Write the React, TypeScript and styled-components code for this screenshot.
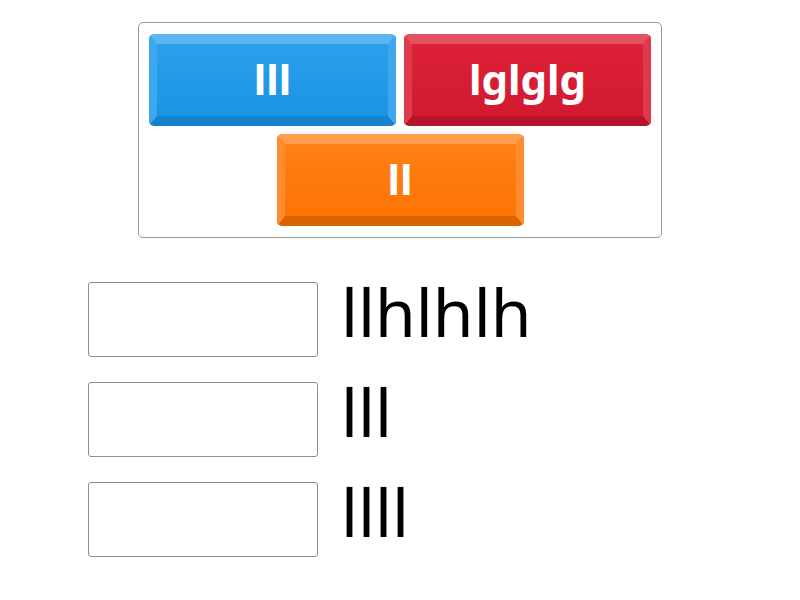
import React from "react";
import styled, { createGlobalStyle } from "styled-components";

const Global = createGlobalStyle`
  html, body { margin: 0; padding: 0; background: #fff; }
  body { font-family: "Noto Sans", "Open Sans", sans-serif; width: 800px; height: 600px; overflow: hidden; }
`;

const Page = styled.div`
  display: flex;
  flex-direction: column;
  padding-top: 22px;
`;

const Bank = styled.div`
  width: 524px;
  box-sizing: border-box;
  margin: 0 auto;
  border: 1px solid #9a9a9a;
  border-radius: 5px;
  padding: 11px 10px 11px 10px;
  display: flex;
  flex-wrap: wrap;
  justify-content: center;
  gap: 8px;
`;

type Tone = { top: string; side: string; face1: string; face2: string; bottom: string };

const tones: Record<string, Tone> = {
  blue: { top: "#5cb4f0", side: "#3fa7ed", face1: "#2da0ea", face2: "#1994e6", bottom: "#1482cf" },
  red: { top: "#e3505f", side: "#df3a4c", face1: "#dd2136", face2: "#d11a30", bottom: "#b5152a" },
  orange: { top: "#ff9d4d", side: "#ff8c30", face1: "#ff8014", face2: "#fd7404", bottom: "#dc6400" },
};

const Tile = styled.div<{ $tone: Tone }>`
  width: 247px;
  height: 92px;
  box-sizing: border-box;
  border-radius: 5px;
  border-style: solid;
  border-width: 10px 8px 10px 8px;
  border-color: ${(p) => p.$tone.top} ${(p) => p.$tone.side} ${(p) => p.$tone.bottom} ${(p) => p.$tone.side};
  background: linear-gradient(${(p) => p.$tone.face1}, ${(p) => p.$tone.face2});
  display: flex;
  align-items: center;
  justify-content: center;
  color: #fff;
  font-weight: 700;
  font-size: 42px;
  line-height: 1;
  padding-bottom: 2px;
`;

const Rows = styled.div`
  display: flex;
  flex-direction: column;
  gap: 25px;
  padding-left: 88px;
  margin-top: 44px;
`;

const Row = styled.div`
  display: flex;
  align-items: center;
  gap: 23px;
`;

const Slot = styled.div`
  width: 230px;
  height: 75px;
  box-sizing: border-box;
  border: 1px solid #8c8c8c;
  border-radius: 3px;
  background: #fff;
`;

const Label = styled.div`
  font-size: 66px;
  line-height: 1;
  color: #000;
  margin-top: -18px;
`;

export default function App() {
  return (
    <>
      <Global />
      <Page>
        <Bank>
          <Tile $tone={tones.blue}>lll</Tile>
          <Tile $tone={tones.red}>lglglg</Tile>
          <Tile $tone={tones.orange}>ll</Tile>
        </Bank>
        <Rows>
          <Row>
            <Slot />
            <Label>llhlhlh</Label>
          </Row>
          <Row>
            <Slot />
            <Label>lll</Label>
          </Row>
          <Row>
            <Slot />
            <Label>llll</Label>
          </Row>
        </Rows>
      </Page>
    </>
  );
}
